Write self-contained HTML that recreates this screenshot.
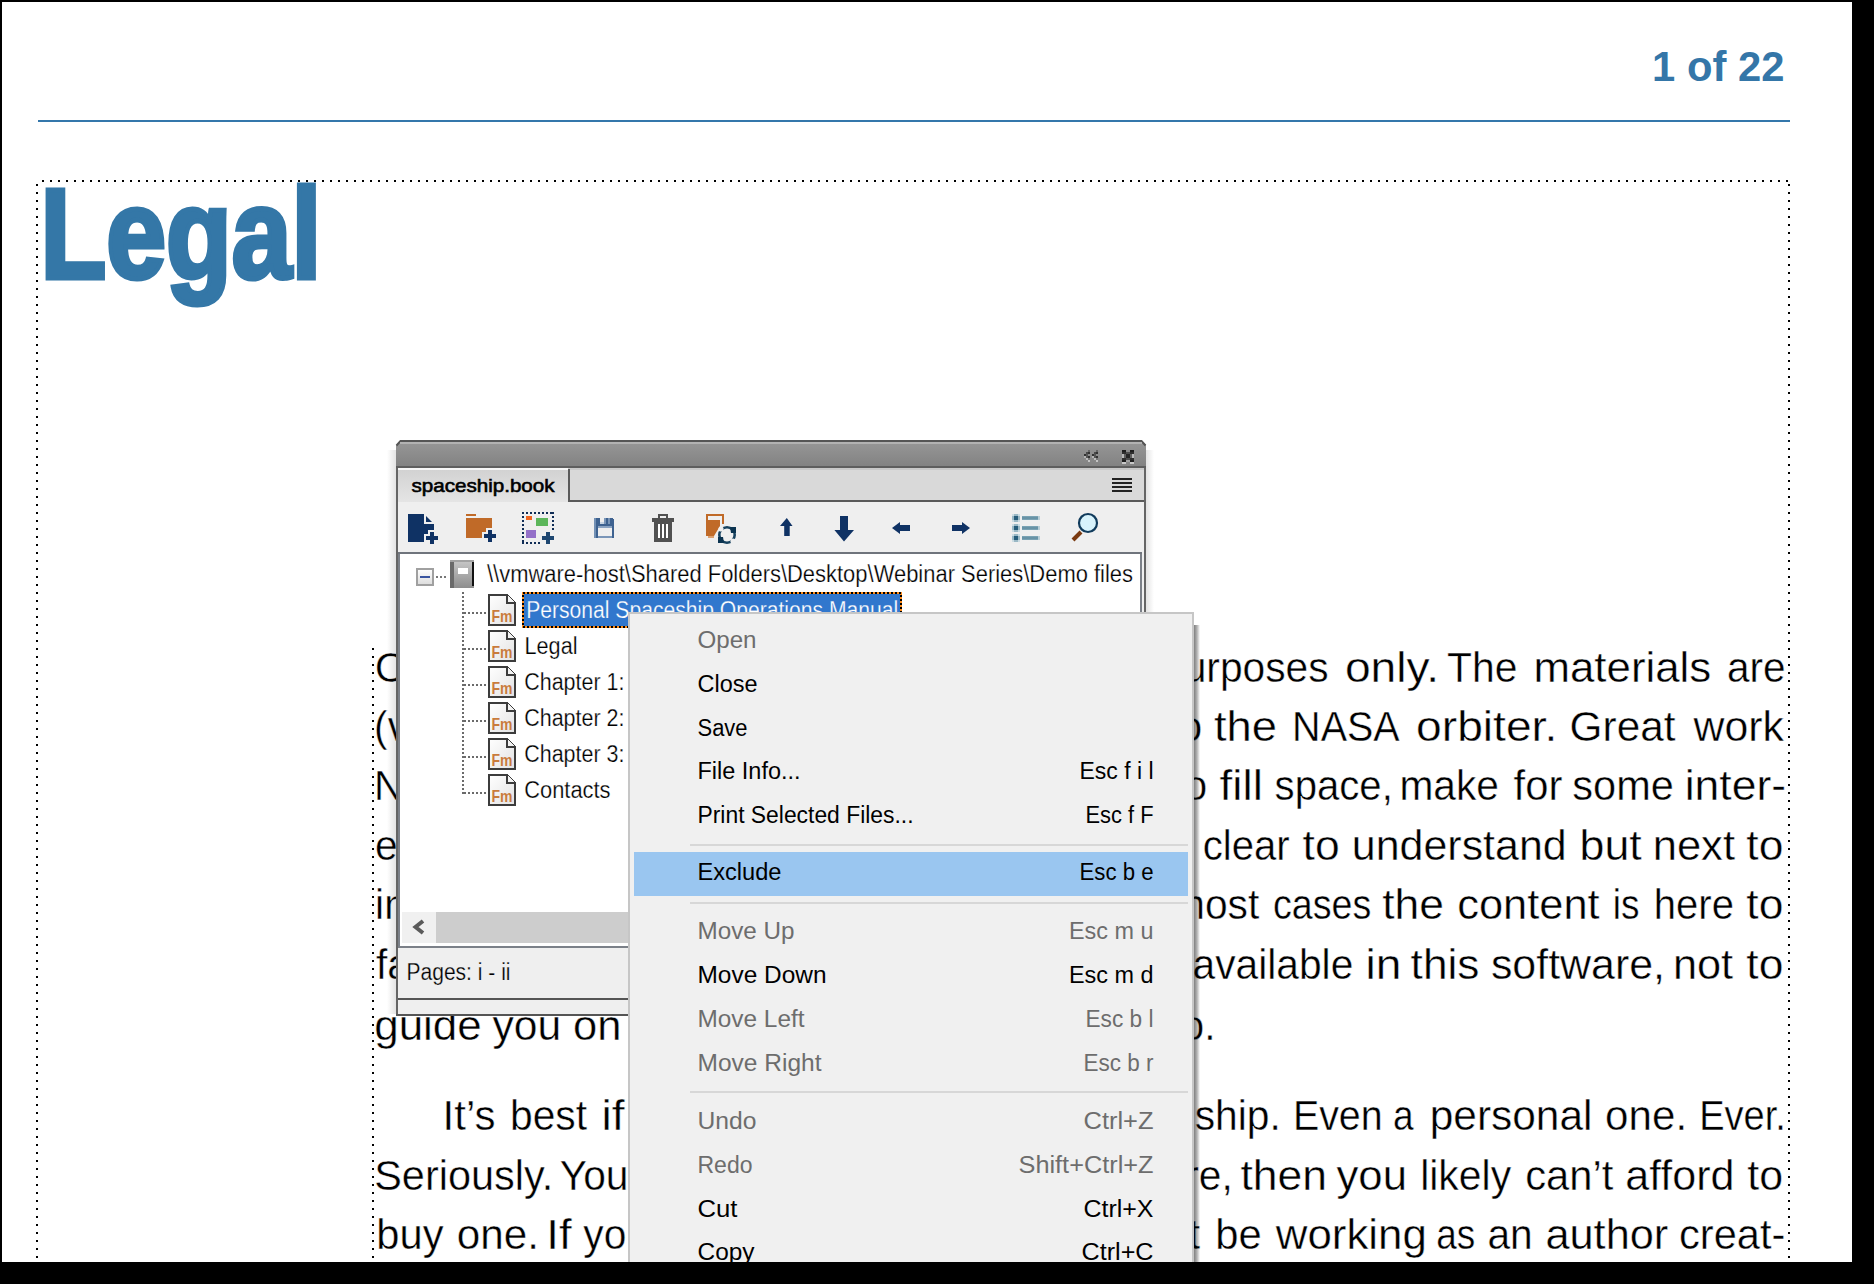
<!DOCTYPE html>
<html><head><meta charset="utf-8">
<style>
html,body{margin:0;padding:0;background:#000;width:1874px;height:1284px;overflow:hidden}
svg{position:absolute;left:0;top:0;display:block}
text{font-family:"Liberation Sans",sans-serif}
.bt{font-size:42px;fill:#000;stroke:#fff;stroke-width:0.4px}
.mi{font-size:23.5px;fill:#000}
.md{font-size:23.5px;fill:#6d6d6d}
.tr{font-size:23px;fill:#000;stroke:#fff;stroke-width:0.25px}
</style></head>
<body>
<svg width="1874" height="1284" viewBox="0 0 1874 1284">
<defs>
<linearGradient id="gTitle" x1="0" y1="0" x2="0" y2="1">
<stop offset="0" stop-color="#979797"/><stop offset="1" stop-color="#818181"/></linearGradient>
<linearGradient id="gTab" x1="0" y1="0" x2="0" y2="1">
<stop offset="0" stop-color="#d2d2d2"/><stop offset="1" stop-color="#e6e6e6"/></linearGradient>
<linearGradient id="gShL" x1="0" y1="0" x2="1" y2="0">
<stop offset="0" stop-color="#000" stop-opacity="0"/><stop offset="1" stop-color="#000" stop-opacity="0.11"/></linearGradient>
<linearGradient id="gShR" x1="0" y1="0" x2="1" y2="0">
<stop offset="0" stop-color="#000" stop-opacity="0.11"/><stop offset="1" stop-color="#000" stop-opacity="0"/></linearGradient>
<linearGradient id="gMShR" x1="0" y1="0" x2="1" y2="0">
<stop offset="0" stop-color="#000" stop-opacity="0.5"/><stop offset="0.5" stop-color="#000" stop-opacity="0.3"/><stop offset="1" stop-color="#000" stop-opacity="0"/></linearGradient>
<linearGradient id="gFm" x1="0" y1="0" x2="1" y2="1">
<stop offset="0" stop-color="#ffffff"/><stop offset="1" stop-color="#e2e2e2"/></linearGradient>
<linearGradient id="gBook" x1="0" y1="0" x2="0" y2="1">
<stop offset="0" stop-color="#c8c8c8"/><stop offset="1" stop-color="#8e8e8e"/></linearGradient>
<linearGradient id="gBox" x1="0" y1="0" x2="0" y2="1">
<stop offset="0" stop-color="#ffffff"/><stop offset="1" stop-color="#dcdcdc"/></linearGradient>
</defs>

<!-- page -->
<rect x="2" y="2" width="1850" height="1260" fill="#fff"/>

<!-- header -->
<text x="1652.1" y="80.5" font-size="43" font-weight="bold" fill="#3476a8" textLength="132.3" lengthAdjust="spacingAndGlyphs">1 of 22</text>
<rect x="38" y="120" width="1752" height="2" fill="#3477ab"/>

<!-- frames (dotted) -->
<line x1="42" y1="181" x2="1790" y2="181" stroke="#000" stroke-width="2" stroke-dasharray="2 6"/>
<line x1="37" y1="184" x2="37" y2="1262" stroke="#000" stroke-width="2" stroke-dasharray="2 6"/>
<line x1="1789" y1="184" x2="1789" y2="1262" stroke="#000" stroke-width="2" stroke-dasharray="2 6"/>
<line x1="373" y1="648" x2="373" y2="1262" stroke="#000" stroke-width="2" stroke-dasharray="2 6"/>

<!-- heading -->
<text x="40.5" y="278.2" font-size="128.5" font-weight="bold" fill="#3477a7" stroke="#3477a7" stroke-width="5" stroke-linejoin="miter" textLength="281" lengthAdjust="spacingAndGlyphs">Legal</text>

<!-- body text -->
<g class="bt">
<text x="375.0" y="682" textLength="67.9" lengthAdjust="spacingAndGlyphs">Our</text>
<text x="1183.7" y="682" textLength="144.9" lengthAdjust="spacingAndGlyphs">urposes</text>
<text x="1344.9" y="682" textLength="94.1" lengthAdjust="spacingAndGlyphs">only.</text>
<text x="1447.0" y="682" textLength="70.4" lengthAdjust="spacingAndGlyphs">The</text>
<text x="1533.4" y="682" textLength="177.9" lengthAdjust="spacingAndGlyphs">materials</text>
<text x="1727.0" y="682" textLength="58.6" lengthAdjust="spacingAndGlyphs">are</text>
<text x="374.1" y="740.5" textLength="154.0" lengthAdjust="spacingAndGlyphs">(vaguely</text>
<text x="1168.3" y="740.5" textLength="34.0" lengthAdjust="spacingAndGlyphs">to</text>
<text x="1214.0" y="740.5" textLength="63.1" lengthAdjust="spacingAndGlyphs">the</text>
<text x="1292.1" y="740.5" textLength="107.6" lengthAdjust="spacingAndGlyphs">NASA</text>
<text x="1416.1" y="740.5" textLength="141.2" lengthAdjust="spacingAndGlyphs">orbiter.</text>
<text x="1569.6" y="740.5" textLength="105.9" lengthAdjust="spacingAndGlyphs">Great</text>
<text x="1693.6" y="740.5" textLength="90.4" lengthAdjust="spacingAndGlyphs">work</text>
<text x="374.1" y="799.5" textLength="122.3" lengthAdjust="spacingAndGlyphs">NASA!</text>
<text x="1173.3" y="799.5" textLength="34.0" lengthAdjust="spacingAndGlyphs">to</text>
<text x="1219.6" y="799.5" textLength="43.3" lengthAdjust="spacingAndGlyphs">fill</text>
<text x="1274.6" y="799.5" textLength="118.2" lengthAdjust="spacingAndGlyphs">space,</text>
<text x="1399.4" y="799.5" textLength="99.6" lengthAdjust="spacingAndGlyphs">make</text>
<text x="1513.6" y="799.5" textLength="48.8" lengthAdjust="spacingAndGlyphs">for</text>
<text x="1572.3" y="799.5" textLength="101.5" lengthAdjust="spacingAndGlyphs">some</text>
<text x="1684.7" y="799.5" textLength="101.4" lengthAdjust="spacingAndGlyphs">inter-</text>
<text x="375.0" y="859.5" textLength="86.1" lengthAdjust="spacingAndGlyphs">easy</text>
<text x="1202.7" y="859.5" textLength="87.0" lengthAdjust="spacingAndGlyphs">clear</text>
<text x="1302.6" y="859.5" textLength="37.1" lengthAdjust="spacingAndGlyphs">to</text>
<text x="1351.8" y="859.5" textLength="214.9" lengthAdjust="spacingAndGlyphs">understand</text>
<text x="1579.5" y="859.5" textLength="62.2" lengthAdjust="spacingAndGlyphs">but</text>
<text x="1652.7" y="859.5" textLength="82.3" lengthAdjust="spacingAndGlyphs">next</text>
<text x="1746.3" y="859.5" textLength="37.1" lengthAdjust="spacingAndGlyphs">to</text>
<text x="375.1" y="919" textLength="31.7" lengthAdjust="spacingAndGlyphs">in</text>
<text x="1171.0" y="919" textLength="88.3" lengthAdjust="spacingAndGlyphs">most</text>
<text x="1272.9" y="919" textLength="98.3" lengthAdjust="spacingAndGlyphs">cases</text>
<text x="1382.2" y="919" textLength="61.8" lengthAdjust="spacingAndGlyphs">the</text>
<text x="1457.2" y="919" textLength="142.4" lengthAdjust="spacingAndGlyphs">content</text>
<text x="1612.7" y="919" textLength="26.7" lengthAdjust="spacingAndGlyphs">is</text>
<text x="1653.8" y="919" textLength="80.1" lengthAdjust="spacingAndGlyphs">here</text>
<text x="1746.3" y="919" textLength="37.1" lengthAdjust="spacingAndGlyphs">to</text>
<text x="376.0" y="978.5" textLength="149.5" lengthAdjust="spacingAndGlyphs">facilitate</text>
<text x="1192.5" y="978.5" textLength="160.8" lengthAdjust="spacingAndGlyphs">available</text>
<text x="1365.4" y="978.5" textLength="35.9" lengthAdjust="spacingAndGlyphs">in</text>
<text x="1410.6" y="978.5" textLength="68.8" lengthAdjust="spacingAndGlyphs">this</text>
<text x="1490.9" y="978.5" textLength="174.1" lengthAdjust="spacingAndGlyphs">software,</text>
<text x="1672.9" y="978.5" textLength="60.2" lengthAdjust="spacingAndGlyphs">not</text>
<text x="1746.3" y="978.5" textLength="37.1" lengthAdjust="spacingAndGlyphs">to</text>
<text x="374.2" y="1039.5" textLength="107.6" lengthAdjust="spacingAndGlyphs">guide</text>
<text x="492.5" y="1039.5" textLength="68.7" lengthAdjust="spacingAndGlyphs">you</text>
<text x="573.1" y="1039.5" textLength="48.4" lengthAdjust="spacingAndGlyphs">on</text>
<text x="1170.3" y="1039.5" textLength="45.3" lengthAdjust="spacingAndGlyphs">to.</text>
<text x="442.6" y="1130" textLength="52.9" lengthAdjust="spacingAndGlyphs">It’s</text>
<text x="510.0" y="1130" textLength="77.1" lengthAdjust="spacingAndGlyphs">best</text>
<text x="601.5" y="1130" textLength="23.1" lengthAdjust="spacingAndGlyphs">if</text>
<text x="1194.7" y="1130" textLength="86.1" lengthAdjust="spacingAndGlyphs">ship.</text>
<text x="1292.9" y="1130" textLength="89.8" lengthAdjust="spacingAndGlyphs">Even</text>
<text x="1393.1" y="1130" textLength="20.6" lengthAdjust="spacingAndGlyphs">a</text>
<text x="1429.7" y="1130" textLength="162.8" lengthAdjust="spacingAndGlyphs">personal</text>
<text x="1605.1" y="1130" textLength="82.0" lengthAdjust="spacingAndGlyphs">one.</text>
<text x="1699.2" y="1130" textLength="86.7" lengthAdjust="spacingAndGlyphs">Ever.</text>
<text x="374.2" y="1190" textLength="179.0" lengthAdjust="spacingAndGlyphs">Seriously.</text>
<text x="559.8" y="1190" textLength="68.7" lengthAdjust="spacingAndGlyphs">You</text>
<text x="1162.6" y="1190" textLength="70.2" lengthAdjust="spacingAndGlyphs">are,</text>
<text x="1240.4" y="1190" textLength="86.6" lengthAdjust="spacingAndGlyphs">then</text>
<text x="1336.5" y="1190" textLength="70.5" lengthAdjust="spacingAndGlyphs">you</text>
<text x="1420.2" y="1190" textLength="90.9" lengthAdjust="spacingAndGlyphs">likely</text>
<text x="1525.2" y="1190" textLength="88.1" lengthAdjust="spacingAndGlyphs">can’t</text>
<text x="1625.2" y="1190" textLength="109.3" lengthAdjust="spacingAndGlyphs">afford</text>
<text x="1747.3" y="1190" textLength="35.8" lengthAdjust="spacingAndGlyphs">to</text>
<text x="376.3" y="1248.5" textLength="67.2" lengthAdjust="spacingAndGlyphs">buy</text>
<text x="456.8" y="1248.5" textLength="82.2" lengthAdjust="spacingAndGlyphs">one.</text>
<text x="546.3" y="1248.5" textLength="25.3" lengthAdjust="spacingAndGlyphs">If</text>
<text x="583.3" y="1248.5" textLength="65.7" lengthAdjust="spacingAndGlyphs">you</text>
<text x="1188.8" y="1248.5" textLength="11.3" lengthAdjust="spacingAndGlyphs">t</text>
<text x="1215.2" y="1248.5" textLength="46.5" lengthAdjust="spacingAndGlyphs">be</text>
<text x="1275.8" y="1248.5" textLength="151.1" lengthAdjust="spacingAndGlyphs">working</text>
<text x="1436.2" y="1248.5" textLength="39.0" lengthAdjust="spacingAndGlyphs">as</text>
<text x="1487.4" y="1248.5" textLength="45.3" lengthAdjust="spacingAndGlyphs">an</text>
<text x="1545.4" y="1248.5" textLength="122.9" lengthAdjust="spacingAndGlyphs">author</text>
<text x="1679.0" y="1248.5" textLength="106.3" lengthAdjust="spacingAndGlyphs">creat-</text>
</g>

<!-- DIALOG -->

<g id="dialog" shape-rendering="crispEdges">
<!-- shadows -->
<rect x="387" y="450" width="9" height="564" fill="url(#gShL)"/>
<rect x="1146" y="450" width="8" height="564" fill="url(#gShR)"/>
<!-- body -->
<rect x="396" y="466" width="750" height="550" fill="#efefef"/>
<rect x="396" y="466" width="2" height="550" fill="#656565"/>
<rect x="1144" y="466" width="2" height="550" fill="#656565"/>
<rect x="396" y="1014" width="750" height="2" fill="#555"/>
<!-- title bar -->
<path d="M396,445 L400,441 H1142 L1146,445 V468 H396 Z" fill="url(#gTitle)"/>
<path d="M396.5,445.5 L400.5,441 H1141.5 L1145.5,445.5" stroke="#555" stroke-width="2" fill="none" shape-rendering="geometricPrecision"/>
<rect x="400" y="442" width="742" height="2" fill="#b2b2b2"/>
<rect x="396" y="466" width="750" height="2" fill="#5e5e5e"/>
<!-- << and X -->
<rect x="1088" y="450" width="2" height="2" fill="#666"/>
<rect x="1086" y="452" width="2" height="2" fill="#4a4a4a"/>
<rect x="1088" y="452" width="2" height="2" fill="#333"/>
<rect x="1084" y="454" width="2" height="2" fill="#333"/>
<rect x="1086" y="454" width="2" height="2" fill="#555"/>
<rect x="1084" y="456" width="2" height="2" fill="#b4b4b4"/>
<rect x="1086" y="456" width="2" height="2" fill="#555"/>
<rect x="1088" y="456" width="2" height="2" fill="#333"/>
<rect x="1086" y="458" width="2" height="2" fill="#bcbcbc"/>
<rect x="1088" y="458" width="2" height="2" fill="#777"/>
<rect x="1088" y="460" width="2" height="2" fill="#c4c4c4"/>
<rect x="1096" y="450" width="2" height="2" fill="#666"/>
<rect x="1094" y="452" width="2" height="2" fill="#4a4a4a"/>
<rect x="1096" y="452" width="2" height="2" fill="#333"/>
<rect x="1092" y="454" width="2" height="2" fill="#333"/>
<rect x="1094" y="454" width="2" height="2" fill="#555"/>
<rect x="1092" y="456" width="2" height="2" fill="#b4b4b4"/>
<rect x="1094" y="456" width="2" height="2" fill="#555"/>
<rect x="1096" y="456" width="2" height="2" fill="#333"/>
<rect x="1094" y="458" width="2" height="2" fill="#bcbcbc"/>
<rect x="1096" y="458" width="2" height="2" fill="#777"/>
<rect x="1096" y="460" width="2" height="2" fill="#c4c4c4"/>
<rect x="1122" y="450" width="4" height="2" fill="#1e1e1e"/>
<rect x="1126" y="450" width="4" height="2" fill="#8a8a8a"/>
<rect x="1130" y="450" width="4" height="2" fill="#1e1e1e"/>
<rect x="1122" y="452" width="4" height="2" fill="#2e2e2e"/>
<rect x="1126" y="452" width="4" height="2" fill="#4e4e4e"/>
<rect x="1130" y="452" width="4" height="2" fill="#2e2e2e"/>
<rect x="1122" y="454" width="2" height="2" fill="#b8b8b8"/>
<rect x="1124" y="454" width="2" height="2" fill="#606060"/>
<rect x="1126" y="454" width="4" height="2" fill="#262626"/>
<rect x="1130" y="454" width="2" height="2" fill="#606060"/>
<rect x="1132" y="454" width="2" height="2" fill="#b8b8b8"/>
<rect x="1122" y="456" width="2" height="2" fill="#b8b8b8"/>
<rect x="1124" y="456" width="2" height="2" fill="#606060"/>
<rect x="1126" y="456" width="4" height="2" fill="#262626"/>
<rect x="1130" y="456" width="2" height="2" fill="#606060"/>
<rect x="1132" y="456" width="2" height="2" fill="#b8b8b8"/>
<rect x="1122" y="458" width="4" height="2" fill="#2e2e2e"/>
<rect x="1126" y="458" width="4" height="2" fill="#4e4e4e"/>
<rect x="1130" y="458" width="4" height="2" fill="#2e2e2e"/>
<rect x="1122" y="460" width="4" height="2" fill="#1e1e1e"/>
<rect x="1126" y="460" width="4" height="2" fill="#a0a0a0"/>
<rect x="1130" y="460" width="4" height="2" fill="#1e1e1e"/>
<rect x="1122" y="462" width="4" height="2" fill="#c8c8c8"/>
<rect x="1130" y="462" width="4" height="2" fill="#c8c8c8"/>

<!-- tab strip -->
<rect x="398" y="468" width="746" height="34" fill="#d9d9d9"/>
<rect x="398" y="468" width="746" height="2" fill="#c9c9c9"/>
<rect x="398" y="468" width="170" height="2" fill="#f6f6f6"/>
<rect x="398" y="470" width="170" height="34" fill="url(#gTab)"/>
<rect x="568" y="469" width="2" height="33" fill="#5a5a5a"/>
<rect x="568" y="500" width="576" height="2" fill="#5a5a5a"/>
<text x="411.5" y="491.5" font-size="18.5" fill="#000" stroke="#000" stroke-width="0.6" textLength="143" lengthAdjust="spacingAndGlyphs" shape-rendering="geometricPrecision">spaceship.book</text>
<rect x="1112" y="478" width="20" height="2" fill="#222"/>
<rect x="1112" y="482" width="20" height="2" fill="#222"/>
<rect x="1112" y="486" width="20" height="2" fill="#222"/>
<rect x="1112" y="490" width="20" height="2" fill="#222"/>
<!-- toolbar bg -->
<rect x="398" y="502" width="746" height="50" fill="#efefef"/>
<rect x="398" y="552" width="744" height="2" fill="#6f747c"/>

<!-- icon 1: doc+ -->
<g fill="#0f3264">
<path d="M408,514 H424 V524 H434 V530 H428 V534 H424 V542 H408 Z"/>
<path d="M426,516 L432,522 H426 Z" shape-rendering="geometricPrecision"/>
<rect x="426" y="536" width="12" height="4"/><rect x="430" y="532" width="4" height="12"/>
</g>
<!-- icon 2: folder+ -->
<g fill="#c06a28">
<rect x="466" y="514" width="10" height="2"/>
<path d="M466,518 H492 V528 H486 V532 H482 V538 H466 Z"/>
</g>
<g fill="#0f3264"><rect x="484" y="534" width="12" height="4"/><rect x="488" y="530" width="4" height="12"/></g>
<!-- icon 3: selection -->
<g fill="#0f2c55"><rect x="522" y="512" width="2" height="2"/><rect x="526" y="512" width="2" height="2"/><rect x="530" y="512" width="2" height="2"/><rect x="534" y="512" width="2" height="2"/><rect x="538" y="512" width="2" height="2"/><rect x="542" y="512" width="2" height="2"/><rect x="546" y="512" width="2" height="2"/><rect x="550" y="512" width="4" height="2"/><rect x="552" y="516" width="2" height="2"/><rect x="552" y="520" width="2" height="2"/><rect x="552" y="524" width="2" height="2"/><rect x="552" y="528" width="2" height="2"/><rect x="522" y="516" width="2" height="2"/><rect x="522" y="520" width="2" height="2"/><rect x="522" y="524" width="2" height="2"/><rect x="522" y="528" width="2" height="2"/><rect x="522" y="532" width="2" height="2"/><rect x="522" y="536" width="2" height="2"/><rect x="522" y="540" width="2" height="4"/><rect x="526" y="542" width="2" height="2"/><rect x="530" y="542" width="2" height="2"/><rect x="534" y="542" width="2" height="2"/><rect x="538" y="542" width="2" height="2"/></g>
<rect x="526" y="516" width="6" height="4" fill="#f06520"/>
<rect x="536" y="518" width="12" height="8" fill="#5cb65a"/>
<rect x="526" y="530" width="10" height="8" fill="#9470c8"/>
<g fill="#1e4670"><rect x="542" y="536" width="12" height="4"/><rect x="546" y="532" width="4" height="12"/></g>
<!-- icon 4: floppy -->
<g fill="#3e6290">
<path d="M594,518 H600 V524 H604 V518 H612 L614,520 V538 H594 Z M598,528 V536 H612 V528 Z" fill-rule="evenodd"/>
</g>
<rect x="594" y="518" width="2" height="20" fill="#7290b4"/>
<rect x="598" y="526" width="14" height="2" fill="#8aa3c2"/>
<rect x="598" y="536" width="14" height="2" fill="#7a96b8"/>
<rect x="604" y="518" width="2" height="6" fill="#7a96b8"/><rect x="608" y="518" width="2" height="6" fill="#7a96b8"/><rect x="600" y="522" width="4" height="2" fill="#c9d5e2"/>
<!-- icon 5: trash -->
<g fill="#515151">
<path d="M658,514 H668 V518 H674 V522 H672 V542 H654 V522 H652 V518 H658 Z M660,516 V518 H666 V516 Z" fill-rule="evenodd"/>
</g>
<g fill="#fff"><rect x="658" y="524" width="2" height="14"/><rect x="662" y="524" width="2" height="14"/><rect x="666" y="524" width="2" height="14"/></g>
<!-- icon 6: book refresh -->
<g fill="#c06a28">
<rect x="706" y="514" width="18" height="2"/>
<rect x="722" y="514" width="2" height="10"/>
<path d="M706,516 H708 V520 H720 V526 L714,536 H706 Z" shape-rendering="geometricPrecision"/>
</g>
<rect x="708" y="536" width="6" height="2" fill="#dca070"/>
<g shape-rendering="geometricPrecision">
<circle cx="727" cy="535" r="7.7" stroke="#17425f" stroke-width="2.6" fill="none"/>
<circle cx="721" cy="529" r="2.6" fill="#efefef"/>
<circle cx="733" cy="541" r="2.6" fill="#efefef"/>
<path d="M730,527 H736 V533 H731 Z" fill="#0b3350"/>
<path d="M718,537 H723 L724,543 H718 Z" fill="#0b3350"/>
</g>
<!-- icon 7: up arrow -->
<g fill="#0f3264" shape-rendering="geometricPrecision">
<path d="M786.8,518 L792.5,526 H789.7 V536 H784.2 V526 H780 Z"/>
<!-- icon 8: down -->
<path d="M840,516 H848 V530 H854 L844,541.6 L834.4,530 H840 Z"/>
<!-- icon 9: left -->
<path d="M892,528 L900,522 V525 H910 V531 H900 V534 Z"/>
<!-- icon 10: right -->
<path d="M970,528 L962,522 V525 H952 V531 H962 V534 Z"/>
</g>
<!-- icon 11: list -->
<rect x="1012" y="514" width="8" height="8" fill="#cddde4"/><rect x="1014" y="514" width="4" height="8" fill="#9ab8c5"/><rect x="1012" y="516" width="8" height="4" fill="#9ab8c5"/><rect x="1014" y="516" width="4" height="4" fill="#275d7b"/>
<rect x="1022" y="516" width="16" height="4" fill="#7aa2b3"/><rect x="1022" y="517" width="16" height="2" fill="#6893a6"/><rect x="1038" y="516" width="2" height="4" fill="#b7cdd6"/>
<rect x="1012" y="524" width="8" height="8" fill="#cddde4"/><rect x="1014" y="524" width="4" height="8" fill="#9ab8c5"/><rect x="1012" y="526" width="8" height="4" fill="#9ab8c5"/><rect x="1014" y="526" width="4" height="4" fill="#275d7b"/>
<rect x="1022" y="526" width="16" height="4" fill="#7aa2b3"/><rect x="1022" y="527" width="16" height="2" fill="#6893a6"/><rect x="1038" y="526" width="2" height="4" fill="#b7cdd6"/>
<rect x="1012" y="534" width="8" height="8" fill="#cddde4"/><rect x="1014" y="534" width="4" height="8" fill="#9ab8c5"/><rect x="1012" y="536" width="8" height="4" fill="#9ab8c5"/><rect x="1014" y="536" width="4" height="4" fill="#275d7b"/>
<rect x="1022" y="536" width="16" height="4" fill="#7aa2b3"/><rect x="1022" y="537" width="16" height="2" fill="#6893a6"/><rect x="1038" y="536" width="2" height="4" fill="#b7cdd6"/>

<!-- icon 12: magnifier -->
<g shape-rendering="geometricPrecision">
<path d="M1073,540 L1081,532" stroke="#7a3a10" stroke-width="4"/>
<circle cx="1088" cy="523" r="9" fill="#d8f3fc" stroke="#103b5c" stroke-width="2.2"/>
</g>

<!-- tree panel -->
<rect x="398" y="554" width="744" height="394" fill="#7b8088"/>
<rect x="400" y="554" width="740" height="392" fill="#fff"/>
<!-- scrollbar -->
<rect x="402" y="912" width="738" height="31" fill="#f0f0f0"/>
<rect x="436" y="912" width="704" height="31" fill="#cdcdcd"/>
<path d="M423,921 L415.5,927 L423,933" stroke="#5a5a5a" stroke-width="4" fill="none" stroke-linejoin="miter" shape-rendering="geometricPrecision"/>
<!-- status -->
<rect x="398" y="948" width="746" height="50" fill="#efefef"/>
<rect x="398" y="998" width="746" height="2" fill="#555"/>
<text x="406.5" y="980" class="tr" style="stroke:#efefef" textLength="104" lengthAdjust="spacingAndGlyphs" shape-rendering="geometricPrecision">Pages: i - ii</text>

<!-- tree contents -->
<rect x="417" y="569" width="16" height="16" fill="url(#gBox)" stroke="#a0a0a0" stroke-width="2"/>
<rect x="420" y="576" width="10" height="2" fill="#3a55a0"/>
<path d="M436,577 H448" stroke="#777" stroke-width="2" stroke-dasharray="2 2"/>
<!-- book icon -->
<rect x="450" y="560" width="24" height="28" fill="url(#gBook)"/>
<rect x="450" y="562" width="4" height="26" fill="#6a6a6a"/>
<rect x="450" y="560" width="24" height="2" fill="#a2a2a2"/>
<rect x="472" y="562" width="2" height="24" fill="#111"/>
<rect x="458" y="568" width="10" height="6" fill="#fff"/>
<text x="487" y="581.5" class="tr" textLength="646" lengthAdjust="spacingAndGlyphs" shape-rendering="geometricPrecision">\\vmware-host\Shared Folders\Desktop\Webinar Series\Demo files</text>
<!-- dotted tree lines -->
<path d="M463,592 V794" stroke="#6a6a6a" stroke-width="2" stroke-dasharray="2 2"/>
<g stroke="#6a6a6a" stroke-width="2" stroke-dasharray="2 2">
<path d="M464,613 H486"/><path d="M464,649 H486"/><path d="M464,685 H486"/><path d="M464,721 H486"/><path d="M464,757 H486"/><path d="M464,793 H486"/>
</g>
<g transform="translate(488,594)">
<path d="M1,1 H19 L27,9 V31 H1 Z" fill="url(#gFm)" stroke="#3c3c3c" stroke-width="2"/>
<path d="M19,1 V9 H27" fill="#f2f2f2" stroke="#3c3c3c" stroke-width="2"/>
<text x="3.5" y="28" font-size="17" font-weight="bold" fill="#c97b3c" textLength="21" lengthAdjust="spacingAndGlyphs" shape-rendering="geometricPrecision">Fm</text>
</g>
<g transform="translate(488,630)">
<path d="M1,1 H19 L27,9 V31 H1 Z" fill="url(#gFm)" stroke="#3c3c3c" stroke-width="2"/>
<path d="M19,1 V9 H27" fill="#f2f2f2" stroke="#3c3c3c" stroke-width="2"/>
<text x="3.5" y="28" font-size="17" font-weight="bold" fill="#c97b3c" textLength="21" lengthAdjust="spacingAndGlyphs" shape-rendering="geometricPrecision">Fm</text>
</g>
<g transform="translate(488,666)">
<path d="M1,1 H19 L27,9 V31 H1 Z" fill="url(#gFm)" stroke="#3c3c3c" stroke-width="2"/>
<path d="M19,1 V9 H27" fill="#f2f2f2" stroke="#3c3c3c" stroke-width="2"/>
<text x="3.5" y="28" font-size="17" font-weight="bold" fill="#c97b3c" textLength="21" lengthAdjust="spacingAndGlyphs" shape-rendering="geometricPrecision">Fm</text>
</g>
<g transform="translate(488,702)">
<path d="M1,1 H19 L27,9 V31 H1 Z" fill="url(#gFm)" stroke="#3c3c3c" stroke-width="2"/>
<path d="M19,1 V9 H27" fill="#f2f2f2" stroke="#3c3c3c" stroke-width="2"/>
<text x="3.5" y="28" font-size="17" font-weight="bold" fill="#c97b3c" textLength="21" lengthAdjust="spacingAndGlyphs" shape-rendering="geometricPrecision">Fm</text>
</g>
<g transform="translate(488,738)">
<path d="M1,1 H19 L27,9 V31 H1 Z" fill="url(#gFm)" stroke="#3c3c3c" stroke-width="2"/>
<path d="M19,1 V9 H27" fill="#f2f2f2" stroke="#3c3c3c" stroke-width="2"/>
<text x="3.5" y="28" font-size="17" font-weight="bold" fill="#c97b3c" textLength="21" lengthAdjust="spacingAndGlyphs" shape-rendering="geometricPrecision">Fm</text>
</g>
<g transform="translate(488,774)">
<path d="M1,1 H19 L27,9 V31 H1 Z" fill="url(#gFm)" stroke="#3c3c3c" stroke-width="2"/>
<path d="M19,1 V9 H27" fill="#f2f2f2" stroke="#3c3c3c" stroke-width="2"/>
<text x="3.5" y="28" font-size="17" font-weight="bold" fill="#c97b3c" textLength="21" lengthAdjust="spacingAndGlyphs" shape-rendering="geometricPrecision">Fm</text>
</g>

<!-- selection -->
<rect x="522" y="592" width="380" height="36" fill="#3177cd"/>
<rect x="523" y="593" width="378" height="34" fill="none" stroke="#ff8c1a" stroke-width="2"/>
<rect x="523" y="593" width="378" height="34" fill="none" stroke="#000" stroke-width="2" stroke-dasharray="2 2"/>
<g shape-rendering="geometricPrecision">
<text x="526.2" y="617.5" class="tr" style="fill:#fff;stroke:#3177cd" textLength="372" lengthAdjust="spacingAndGlyphs">Personal Spaceship Operations Manual</text>
<text x="524.5" y="653.5" class="tr" textLength="53" lengthAdjust="spacingAndGlyphs">Legal</text>
<text x="524.2" y="689.5" class="tr" textLength="100.3" lengthAdjust="spacingAndGlyphs">Chapter 1:</text>
<text x="524.2" y="725.5" class="tr" textLength="100.3" lengthAdjust="spacingAndGlyphs">Chapter 2:</text>
<text x="524.2" y="761.5" class="tr" textLength="100.3" lengthAdjust="spacingAndGlyphs">Chapter 3:</text>
<text x="524.2" y="797.5" class="tr" textLength="86.3" lengthAdjust="spacingAndGlyphs">Contacts</text>
</g>
</g>


<!-- MENU -->

<g id="menu">
<rect x="1194" y="625" width="6" height="640" fill="url(#gMShR)"/>
<rect x="628" y="612" width="566" height="660" fill="#c6c6c6"/>
<rect x="630" y="614" width="562" height="660" fill="#f0f0f0"/>
<rect x="690" y="844" width="498" height="2" fill="#d7d7d7"/>
<rect x="634" y="852" width="554" height="44" fill="#9ac6f0"/>
<rect x="690" y="902" width="498" height="2" fill="#d7d7d7"/>
<rect x="690" y="1091" width="498" height="2" fill="#d7d7d7"/>
<text x="697.5" y="647.8" font-size="23.5" fill="#6d6d6d" textLength="59.0" lengthAdjust="spacingAndGlyphs">Open</text>
<text x="697.5" y="691.6" font-size="23.5" fill="#000" textLength="60.0" lengthAdjust="spacingAndGlyphs">Close</text>
<text x="697.5" y="735.5" font-size="23.5" fill="#000" textLength="50.0" lengthAdjust="spacingAndGlyphs">Save</text>
<text x="697.5" y="779.4" font-size="23.5" fill="#000" textLength="103.0" lengthAdjust="spacingAndGlyphs">File Info...</text>
<text x="1079.5" y="779.4" font-size="23.5" fill="#000" textLength="74.0" lengthAdjust="spacingAndGlyphs">Esc f i l</text>
<text x="697.5" y="823.2" font-size="23.5" fill="#000" textLength="216.0" lengthAdjust="spacingAndGlyphs">Print Selected Files...</text>
<text x="1085.5" y="823.2" font-size="23.5" fill="#000" textLength="68.0" lengthAdjust="spacingAndGlyphs">Esc f F</text>
<text x="697.5" y="880.4" font-size="23.5" fill="#000" textLength="84.0" lengthAdjust="spacingAndGlyphs">Exclude</text>
<text x="1079.5" y="880.4" font-size="23.5" fill="#000" textLength="74.0" lengthAdjust="spacingAndGlyphs">Esc b e</text>
<text x="697.5" y="938.8" font-size="23.5" fill="#6d6d6d" textLength="97.0" lengthAdjust="spacingAndGlyphs">Move Up</text>
<text x="1069.0" y="938.8" font-size="23.5" fill="#6d6d6d" textLength="84.5" lengthAdjust="spacingAndGlyphs">Esc m u</text>
<text x="697.5" y="982.6" font-size="23.5" fill="#000" textLength="129.0" lengthAdjust="spacingAndGlyphs">Move Down</text>
<text x="1069.0" y="982.6" font-size="23.5" fill="#000" textLength="84.5" lengthAdjust="spacingAndGlyphs">Esc m d</text>
<text x="697.5" y="1026.5" font-size="23.5" fill="#6d6d6d" textLength="107.0" lengthAdjust="spacingAndGlyphs">Move Left</text>
<text x="1085.5" y="1026.5" font-size="23.5" fill="#6d6d6d" textLength="68.0" lengthAdjust="spacingAndGlyphs">Esc b l</text>
<text x="697.5" y="1070.5" font-size="23.5" fill="#6d6d6d" textLength="124.0" lengthAdjust="spacingAndGlyphs">Move Right</text>
<text x="1083.5" y="1070.5" font-size="23.5" fill="#6d6d6d" textLength="70.0" lengthAdjust="spacingAndGlyphs">Esc b r</text>
<text x="697.5" y="1128.6" font-size="23.5" fill="#6d6d6d" textLength="59.0" lengthAdjust="spacingAndGlyphs">Undo</text>
<text x="1083.5" y="1128.6" font-size="23.5" fill="#6d6d6d" textLength="70.0" lengthAdjust="spacingAndGlyphs">Ctrl+Z</text>
<text x="697.5" y="1172.5" font-size="23.5" fill="#6d6d6d" textLength="55.0" lengthAdjust="spacingAndGlyphs">Redo</text>
<text x="1018.5" y="1172.5" font-size="23.5" fill="#6d6d6d" textLength="135.0" lengthAdjust="spacingAndGlyphs">Shift+Ctrl+Z</text>
<text x="697.5" y="1216.5" font-size="23.5" fill="#000" textLength="40.0" lengthAdjust="spacingAndGlyphs">Cut</text>
<text x="1083.5" y="1216.5" font-size="23.5" fill="#000" textLength="70.0" lengthAdjust="spacingAndGlyphs">Ctrl+X</text>
<text x="697.5" y="1260.4" font-size="23.5" fill="#000" textLength="57.0" lengthAdjust="spacingAndGlyphs">Copy</text>
<text x="1081.5" y="1260.4" font-size="23.5" fill="#000" textLength="72.0" lengthAdjust="spacingAndGlyphs">Ctrl+C</text>
</g>


<!-- bottom/right black -->
<rect x="0" y="1262" width="1874" height="22" fill="#000"/>
<rect x="1852" y="0" width="22" height="1284" fill="#000"/>
</svg>
</body></html>
